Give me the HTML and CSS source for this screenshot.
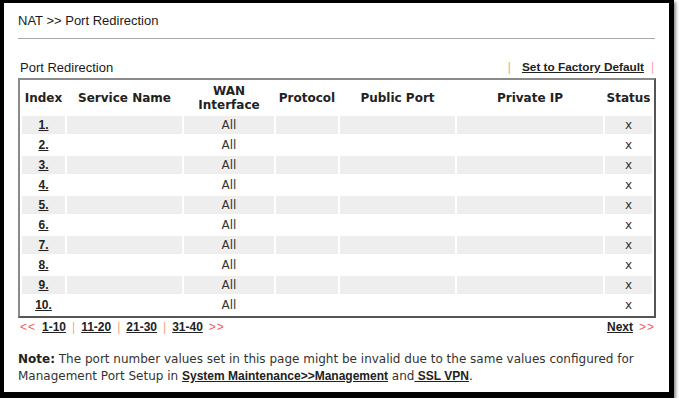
FILE: index.html
```html
<!DOCTYPE html>
<html>
<head>
<meta charset="utf-8">
<link rel="stylesheet" href="styles.css">
</head>
<body>
<div class="frame">
  <div class="title">NAT &gt;&gt; Port Redirection</div>
  <div class="rule"></div>
  <div class="section-head">
    <span class="section-label">Port Redirection</span>
    <span class="actions"><span class="pipe p1">|</span><a class="link" href="#">Set to Factory Default</a><span class="pipe p2 last">|</span></span>
  </div>
  <table class="grid">
    <colgroup>
      <col class="c-idx"><col class="c-svc"><col class="c-wan"><col class="c-proto"><col class="c-pub"><col class="c-priv"><col class="c-stat">
    </colgroup>
    <thead>
      <tr><th>Index</th><th>Service Name</th><th>WAN<br>Interface</th><th>Protocol</th><th>Public Port</th><th>Private IP</th><th>Status</th></tr>
    </thead>
    <tbody>
      <tr class="odd"><td><a class="idx" href="#">1.</a></td><td></td><td>All</td><td></td><td></td><td></td><td>x</td></tr>
      <tr><td><a class="idx" href="#">2.</a></td><td></td><td>All</td><td></td><td></td><td></td><td>x</td></tr>
      <tr class="odd"><td><a class="idx" href="#">3.</a></td><td></td><td>All</td><td></td><td></td><td></td><td>x</td></tr>
      <tr><td><a class="idx" href="#">4.</a></td><td></td><td>All</td><td></td><td></td><td></td><td>x</td></tr>
      <tr class="odd"><td><a class="idx" href="#">5.</a></td><td></td><td>All</td><td></td><td></td><td></td><td>x</td></tr>
      <tr><td><a class="idx" href="#">6.</a></td><td></td><td>All</td><td></td><td></td><td></td><td>x</td></tr>
      <tr class="odd"><td><a class="idx" href="#">7.</a></td><td></td><td>All</td><td></td><td></td><td></td><td>x</td></tr>
      <tr><td><a class="idx" href="#">8.</a></td><td></td><td>All</td><td></td><td></td><td></td><td>x</td></tr>
      <tr class="odd"><td><a class="idx" href="#">9.</a></td><td></td><td>All</td><td></td><td></td><td></td><td>x</td></tr>
      <tr><td><a class="idx" href="#">10.</a></td><td></td><td>All</td><td></td><td></td><td></td><td>x</td></tr>
    </tbody>
  </table>
  <div class="pager">
    <div class="pages"><span class="arrow">&lt;&lt;</span><a class="link" href="#">1-10</a><span class="pipe p2">|</span><a class="link" href="#">11-20</a><span class="pipe p1">|</span><a class="link" href="#">21-30</a><span class="pipe p1">|</span><a class="link" href="#">31-40</a><span class="arrow">&gt;&gt;</span></div>
    <div class="next"><a class="link" href="#">Next</a><span class="arrow">&gt;&gt;</span></div>
  </div>
  <p class="note"><b>Note:</b> The port number values set in this page might be invalid due to the same values configured for Management Port Setup in <a class="link" href="#">System Maintenance&gt;&gt;Management</a> and<a class="link" href="#"> SSL VPN</a>.</p>
</div>
</body>
</html>
```

FILE: styles.css
```css
html, body {
  margin: 0;
  padding: 0;
  background: #fff;
}

.frame {
  box-sizing: border-box;
  width: 674px;
  height: 398px;
  border-style: solid;
  border-color: #000;
  border-width: 3px 5px 6px 4px;
  box-shadow: 2px 2px 3px rgba(0, 0, 0, 0.45);
  padding: 10px 13px 0 14px;
  font-family: "Liberation Sans", Arial, sans-serif;
  color: #222;
}

.title {
  font-size: 13px;
  line-height: 15px;
  color: #1a1a1a;
}

.rule {
  margin-top: 10px;
  height: 0;
  border-top: 1px solid #a8a8a8;
  width: 637px;
}

.section-head {
  margin-top: 21px;
  display: flex;
  justify-content: space-between;
  align-items: center;
  height: 15px;
  line-height: 15px;
  padding-left: 2px;
}

.section-label {
  font-size: 13px;
  color: #1a1a1a;
}

.actions {
  display: flex;
  align-items: center;
  gap: 11px;
  padding-right: 2px;
  white-space: nowrap;
}

.actions .last {
  margin-left: -4px;
}

.link {
  color: #222;
  font-weight: bold;
  text-decoration: underline;
  font-family: "Liberation Sans", Arial, sans-serif;
  font-size: 12px;
}

.actions .link {
  font-size: 11.8px;
}

.pipe {
  font-family: "Liberation Sans", Arial, sans-serif;
  font-size: 12px;
}

.p1 {
  color: #f4a27c;
}

.p2 {
  color: #f7a0a8;
}

.arrow {
  color: #f25a64;
  font-size: 12px;
  letter-spacing: 1px;
}

.grid {
  margin-top: 3px;
  width: 638px;
  border-collapse: separate;
  border-spacing: 2px;
  border-style: solid;
  border-width: 2px;
  border-color: #8a8a8a #555 #555 #8a8a8a;
  table-layout: fixed;
  font-family: "DejaVu Sans", Verdana, sans-serif;
  font-size: 12px;
}

.c-idx { width: 43px; }
.c-svc { width: 115px; }
.c-wan { width: 90px; }
.c-proto { width: 62px; }
.c-pub { width: 115px; }
.c-priv { width: 146px; }
.c-stat { width: 47px; }

.grid th {
  height: 32px;
  padding: 0;
  font-weight: bold;
  font-size: 12px;
  line-height: 14px;
  color: #222;
  text-align: center;
  vertical-align: middle;
}

.grid td {
  height: 18px;
  padding: 0;
  line-height: 18px;
  text-align: center;
  color: #333;
  font-size: 12px;
}

.grid tr.odd td {
  background: #eeeeee;
}

.idx {
  font-family: "Liberation Sans", Arial, sans-serif;
  font-weight: bold;
  font-size: 12px;
  color: #222;
  text-decoration: underline;
}

.pager {
  display: flex;
  justify-content: space-between;
  align-items: center;
  height: 15px;
  line-height: 15px;
  margin-top: 2px;
  padding-left: 2px;
  padding-right: 1px;
}

.pages, .next {
  display: flex;
  align-items: center;
  gap: 6px;
  white-space: nowrap;
}

.note {
  margin: 16px 0 0 0;
  font-family: "DejaVu Sans", Verdana, sans-serif;
  font-size: 12px;
  line-height: 17px;
  color: #333;
}

.note b {
  color: #222;
}
```
